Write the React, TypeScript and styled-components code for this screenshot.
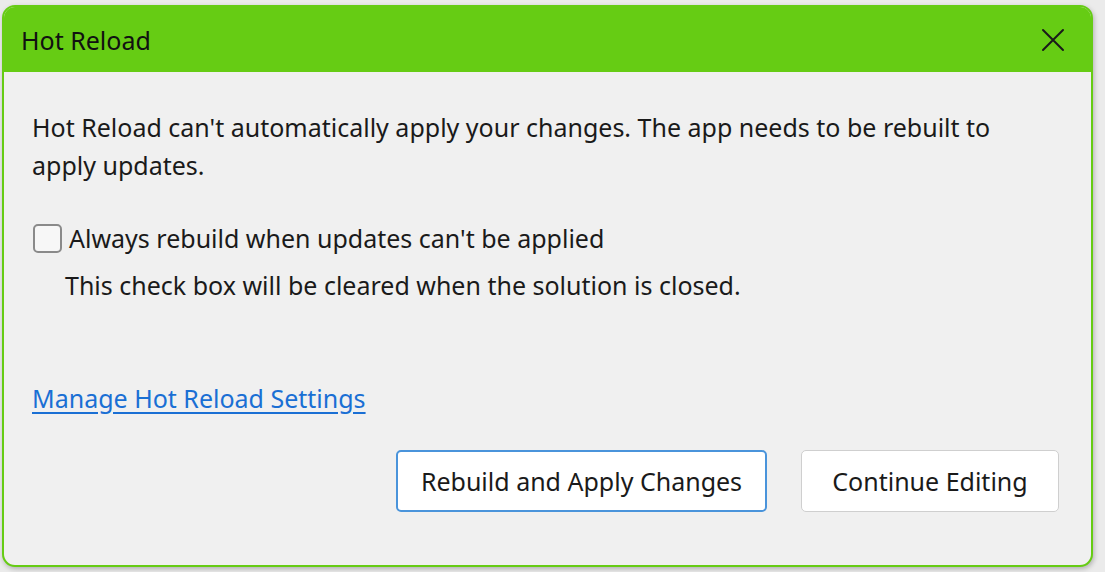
import React from "react";
import styled, { createGlobalStyle } from "styled-components";

const Global = createGlobalStyle`
  html, body { margin: 0; padding: 0; }
  body {
    background: #ebebeb;
    font-family: "Noto Sans", "Open Sans", sans-serif;
    width: 1105px;
    height: 572px;
    overflow: hidden;
  }
`;

const Page = styled.div`
  padding: 5px 0 0 2px;
`;

const Dialog = styled.div`
  box-sizing: border-box;
  width: 1091px;
  height: 562px;
  border: 2px solid #66cc14;
  border-radius: 13px;
  background: #f0f0f0;
  overflow: hidden;
  display: flex;
  flex-direction: column;
  box-shadow: 1px 2px 5px rgba(0, 0, 0, 0.25);
`;

const TitleBar = styled.div`
  height: 65px;
  flex: none;
  background: #66cc14;
  display: flex;
  align-items: center;
  justify-content: space-between;
  padding: 0 25px 0 17px;
`;

const Title = styled.div`
  font-size: 25px;
  color: #111;
`;

const CloseButton = styled.button`
  border: none;
  background: transparent;
  padding: 0;
  width: 26px;
  height: 26px;
  display: flex;
  align-items: center;
  justify-content: center;
  cursor: pointer;
`;

const Body = styled.div`
  flex: 1;
  display: flex;
  flex-direction: column;
  padding: 36px 32px 0 28px;
  color: #1a1a1a;
  font-size: 25px;
`;

const Paragraph = styled.p`
  margin: 0;
  line-height: 38px;
`;

const CheckRow = styled.label`
  display: flex;
  align-items: center;
  gap: 7px;
  margin-top: 35px;
  margin-left: 1px;
  line-height: 38px;
`;

const Box = styled.span`
  box-sizing: border-box;
  width: 29px;
  height: 29px;
  border: 2px solid #8a8a8a;
  border-radius: 5px;
  background: #f7f7f7;
  flex: none;
`;

const Note = styled.div`
  margin-top: 9px;
  margin-left: 33px;
  line-height: 38px;
`;

const Link = styled.a`
  margin-top: 75px;
  color: #1a6fd4;
  text-decoration: underline;
  text-underline-offset: 4px;
  line-height: 38px;
  align-self: flex-start;
  cursor: pointer;
`;

const Actions = styled.div`
  display: flex;
  justify-content: flex-end;
  gap: 34px;
  margin-top: 33px;
`;

const Button = styled.button<{ $primary?: boolean }>`
  box-sizing: border-box;
  height: 62px;
  padding: 0 20px;
  min-width: ${(p) => (p.$primary ? "371px" : "258px")};
  background: #ffffff;
  border: ${(p) => (p.$primary ? "2px solid #4a94db" : "1px solid #cfcfcf")};
  border-radius: 5px;
  font-family: inherit;
  font-size: 25px;
  color: #1a1a1a;
  cursor: pointer;
`;

export default function App() {
  return (
    <>
      <Global />
      <Page>
        <Dialog>
          <TitleBar>
            <Title>Hot Reload</Title>
            <CloseButton aria-label="Close">
              <svg width="24" height="24" viewBox="0 0 24 24">
                <path d="M2 2 L22 22 M22 2 L2 22" stroke="#1a1a1a" strokeWidth="2" strokeLinecap="round" />
              </svg>
            </CloseButton>
          </TitleBar>
          <Body>
            <Paragraph>
              Hot Reload can't automatically apply your changes. The app needs to be rebuilt to apply updates.
            </Paragraph>
            <CheckRow>
              <Box />
              Always rebuild when updates can't be applied
            </CheckRow>
            <Note>This check box will be cleared when the solution is closed.</Note>
            <Link>Manage Hot Reload Settings</Link>
            <Actions>
              <Button $primary>Rebuild and Apply Changes</Button>
              <Button>Continue Editing</Button>
            </Actions>
          </Body>
        </Dialog>
      </Page>
    </>
  );
}
